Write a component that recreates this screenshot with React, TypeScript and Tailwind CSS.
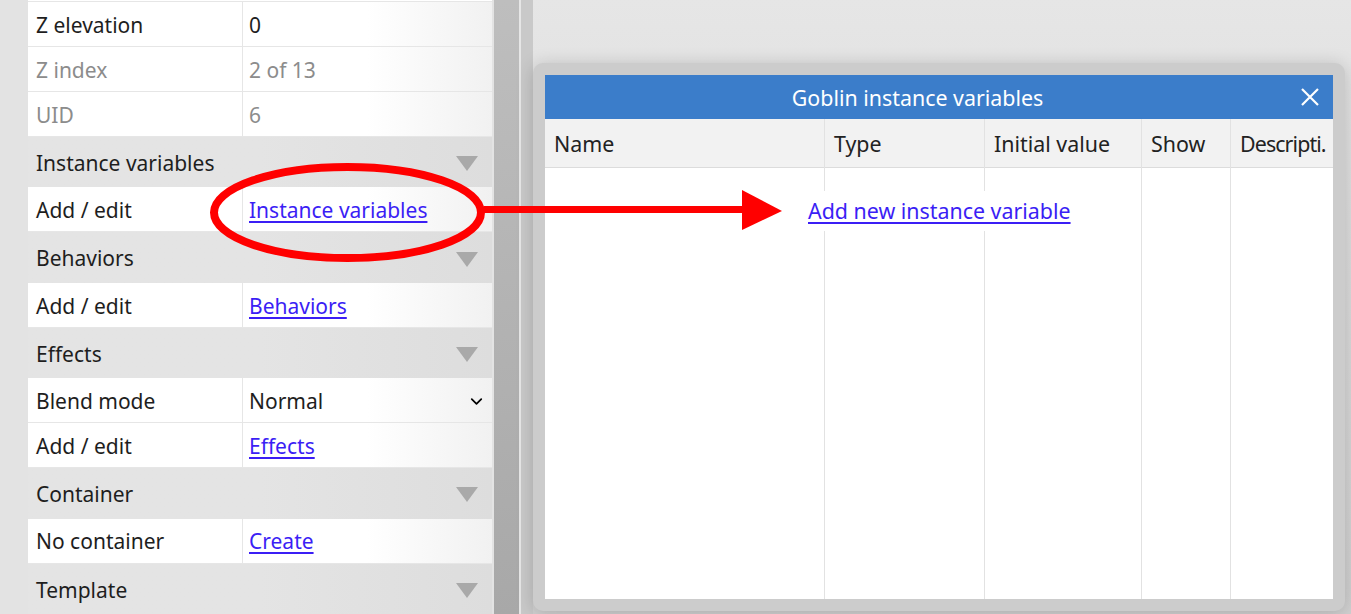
import { ChevronDown } from 'lucide-react';

type Prop = {
  kind: 'prop';
  label: string;
  value: string;
  muted?: boolean;
  link?: boolean;
  select?: boolean;
};
type Section = { kind: 'section'; label: string };
type Row = Prop | Section;

const ROWS: Row[] = [
  { kind: 'prop', label: 'Z elevation', value: '0' },
  { kind: 'prop', label: 'Z index', value: '2 of 13', muted: true },
  { kind: 'prop', label: 'UID', value: '6', muted: true },
  { kind: 'section', label: 'Instance variables' },
  { kind: 'prop', label: 'Add / edit', value: 'Instance variables', link: true },
  { kind: 'section', label: 'Behaviors' },
  { kind: 'prop', label: 'Add / edit', value: 'Behaviors', link: true },
  { kind: 'section', label: 'Effects' },
  { kind: 'prop', label: 'Blend mode', value: 'Normal', select: true },
  { kind: 'prop', label: 'Add / edit', value: 'Effects', link: true },
  { kind: 'section', label: 'Container' },
  { kind: 'prop', label: 'No container', value: 'Create', link: true },
  { kind: 'section', label: 'Template' },
];

const COLUMNS = [
  { label: 'Name', w: 'w-[280px]' },
  { label: 'Type', w: 'w-[160px]' },
  { label: 'Initial value', w: 'w-[157px]' },
  { label: 'Show', w: 'w-[89px]' },
  { label: 'Descripti.', w: 'w-[102px]' },
];

function Triangle() {
  return (
    <svg width="22" height="15" viewBox="0 0 22 15" className="shrink-0">
      <polygon points="0,0 22,0 11,15" fill="#a9a9a9" />
    </svg>
  );
}

function PropertyRow({ row }: { row: Row }) {
  if (row.kind === 'section') {
    return (
      <div className="flex h-[50.5px] items-center justify-between bg-gradient-to-r from-[#e4e4e4] via-[#e4e4e4] to-[#dddddd] pl-[8px] pr-[14px] pt-[3px] text-[#1e1e1e]">
        <span>{row.label}</span>
        <Triangle />
      </div>
    );
  }
  const textColor = row.muted ? 'text-[#8c8c8c]' : 'text-[#1e1e1e]';
  return (
    <div className="flex h-[45px] border-b border-[#e6e6e6] bg-white">
      <div className={`flex w-[215px] items-center border-r border-[#e6e6e6] pl-[8px] pt-[3px] ${textColor}`}>
        {row.label}
      </div>
      <div className={`flex flex-1 items-center justify-between bg-gradient-to-r from-white via-white to-[#f1f1f1] pl-[6px] pr-[6px] pt-[3px] ${textColor}`}>
        {row.link ? (
          <a href="#" className="text-[#3b1ef5] underline underline-offset-[3px]">
            {row.value}
          </a>
        ) : (
          <span>{row.value}</span>
        )}
        {row.select && <ChevronDown size={19} strokeWidth={2.2} className="text-black" />}
      </div>
    </div>
  );
}

function VariablesDialog() {
  return (
    <div className="mt-[63px] flex h-[548px] w-[812px] flex-col rounded-[10px] bg-[#cccccc] p-[12px] text-[21.4px] shadow-[0_2px_18px_rgba(0,0,0,0.18)]">
      <div className="relative flex h-[44px] shrink-0 items-center justify-center bg-[#3b7dca] pr-[43px] pt-[2px] text-white">
        <span>Goblin instance variables</span>
        <svg width="20" height="20" viewBox="0 0 20 20" className="absolute right-[13px] top-[12px]">
          <path d="M2 2 L18 18 M18 2 L2 18" stroke="white" strokeWidth="2.2" />
        </svg>
      </div>
      <div className="relative flex flex-1 overflow-hidden bg-white">
        {COLUMNS.map((c, i) => (
          <div
            key={c.label}
            className={`flex shrink-0 flex-col ${c.w} ${i < COLUMNS.length - 1 ? 'border-r border-[#e2e2e2]' : ''}`}
          >
            <div className="flex h-[49px] items-center border-b border-[#dcdcdc] bg-[#f2f2f2] pl-[9px] pt-[3px] text-[#222222]">
              <span className={`whitespace-nowrap ${i === COLUMNS.length - 1 ? 'tracking-[-0.9px]' : ''}`}>
                {c.label}
              </span>
            </div>
          </div>
        ))}
        <div className="absolute left-[263px] top-[72px] bg-white py-[4px] pr-[4px]">
          <a href="#" className="text-[#3b1ef5] underline underline-offset-[3px]">
            Add new instance variable
          </a>
        </div>
      </div>
    </div>
  );
}

export default function App() {
  return (
    <div className="relative flex h-[614px] w-[1351px] overflow-hidden bg-[#e3e3e3] font-['Noto_Sans',sans-serif] text-[21px] leading-normal">
      {/* properties bar */}
      <div className="ml-[28px] flex w-[464px] shrink-0 flex-col">
        <div className="h-[2px] shrink-0 border-b border-[#e6e6e6] bg-white" />
        {ROWS.map((r, i) => (
          <PropertyRow key={i} row={r} />
        ))}
      </div>
      {/* scrollbar + splitter */}
      <div className="ml-[2px] w-[25px] shrink-0 bg-gradient-to-b from-[#bebebe] to-[#a8a8a8]" />
      <div className="w-[2px] shrink-0 bg-[#e6e6e6]" />
      <div className="w-[12px] shrink-0 bg-[#c9c9c9]" />
      {/* layout view */}
      <div className="flex flex-1 items-start bg-gradient-to-b from-[#e6e6e6] to-[#d0d0d0]">
        <VariablesDialog />
      </div>

      {/* annotation overlay */}
      <svg className="pointer-events-none absolute left-0 top-0" width="1351" height="614">
        <ellipse cx="347.5" cy="212.5" rx="133.5" ry="45.5" fill="none" stroke="#ff0000" strokeWidth="8" />
        <rect x="484" y="206" width="262" height="7" fill="#ff0000" />
        <polygon points="742,190 782,211 742,230" fill="#ff0000" />
      </svg>
    </div>
  );
}
